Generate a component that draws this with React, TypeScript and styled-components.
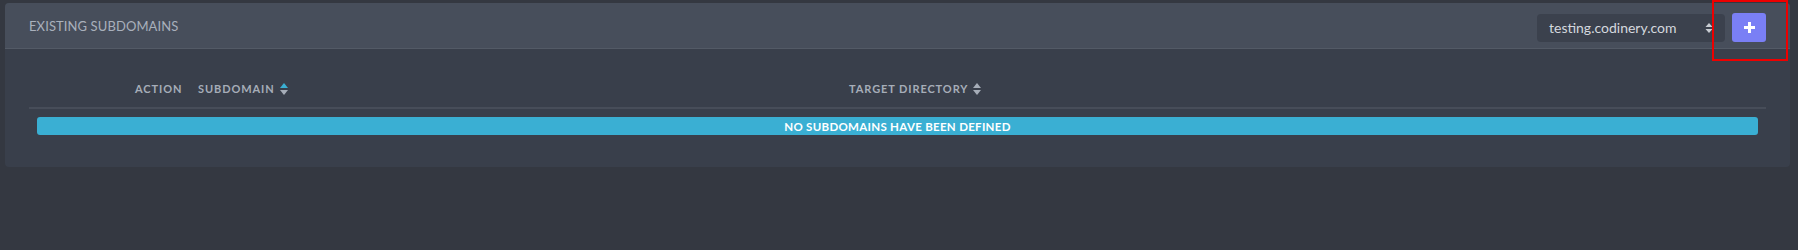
import styled, { createGlobalStyle } from 'styled-components'

const GlobalStyle = createGlobalStyle`
  html, body {
    margin: 0;
    padding: 0;
    background: #343841;
    font-family: Lato, "Noto Sans", sans-serif;
  }
`

const Page = styled.div`
  padding: 3px 8px 0 5px;
  height: 250px;
  box-sizing: border-box;
`

const Card = styled.section`
  background: #393f4b;
  border-radius: 4px;
  padding-bottom: 32px;
`

const CardHeader = styled.header`
  position: relative;
  display: flex;
  align-items: center;
  height: 46px;
  padding: 0 24px;
  background: #474e5b;
  border-radius: 4px 4px 0 0;
  border-bottom: 1px solid #535a66;
  box-sizing: border-box;
`

const Title = styled.h2`
  flex: 1;
  margin: 0;
  font-size: 13px;
  font-weight: 400;
  color: #a9b0bb;
  letter-spacing: 0.1px;
`

const Actions = styled.div`
  display: flex;
  align-items: center;
  gap: 7px;
  margin-top: 4px;
`

const Select = styled.div`
  display: flex;
  align-items: center;
  justify-content: space-between;
  width: 188px;
  height: 28px;
  padding: 0 12px;
  box-sizing: border-box;
  background: #3b414d;
  border-radius: 4px;
  color: #d4d8de;
  font-size: 14px;
`

const AddButton = styled.button`
  width: 34px;
  height: 29px;
  border: none;
  border-radius: 3px;
  background: #7a7ff5;
  display: flex;
  align-items: center;
  justify-content: center;
  padding: 0;
`

const Highlight = styled.div`
  position: absolute;
  left: 1707px;
  top: -3px;
  width: 76px;
  height: 61px;
  border: 2px solid #ee0000;
  box-sizing: border-box;
  pointer-events: none;
`

const Body = styled.div`
  padding: 0 24px;
`

const HeadRow = styled.div`
  display: grid;
  grid-template-columns: 106px 63px 651px 1fr;
  align-items: end;
  height: 60px;
  padding-bottom: 12px;
  box-sizing: border-box;
  border-bottom: 2px solid #474d59;
`

const HeadCell = styled.div`
  display: flex;
  align-items: center;
  gap: 5px;
  font-size: 11px;
  font-weight: 700;
  letter-spacing: 0.9px;
  color: #a6adb8;
  text-transform: uppercase;
`

const Empty = styled.div`
  margin: 8px 8px 0;
  height: 18px;
  border-radius: 3px;
  background: #3aafd3;
  color: #ffffff;
  font-size: 11.5px;
  font-weight: 700;
  letter-spacing: 0.3px;
  display: flex;
  align-items: center;
  justify-content: center;
`

function SortIcon({ active }: { active?: boolean }) {
  return (
    <svg width="8" height="12" viewBox="0 0 8 12">
      <path d="M4 0 L8 5 H0 Z" fill={active ? '#3aafd3' : '#a6adb8'} />
      <path d="M4 12 L8 7 H0 Z" fill="#a6adb8" />
    </svg>
  )
}

function SelectArrows() {
  return (
    <svg width="8" height="12" viewBox="0 0 8 12">
      <path d="M4 1 L7.5 5 H0.5 Z" fill="#c8ccd2" />
      <path d="M4 11 L7.5 7 H0.5 Z" fill="#c8ccd2" />
    </svg>
  )
}

export default function App() {
  return (
    <>
      <GlobalStyle />
      <Page>
        <Card>
          <CardHeader>
            <Title>EXISTING SUBDOMAINS</Title>
            <Actions>
              <Select>
                <span>testing.codinery.com</span>
                <SelectArrows />
              </Select>
              <AddButton aria-label="add">
                <svg width="13" height="13" viewBox="0 0 13 13">
                  <path d="M6.5 1 V12 M1 6.5 H12" stroke="#ffffff" strokeWidth="3" />
                </svg>
              </AddButton>
            </Actions>
            <Highlight />
          </CardHeader>
          <Body>
            <HeadRow>
              <HeadCell />
              <HeadCell>Action</HeadCell>
              <HeadCell>
                Subdomain <SortIcon active />
              </HeadCell>
              <HeadCell>
                Target Directory <SortIcon />
              </HeadCell>
            </HeadRow>
            <Empty>NO SUBDOMAINS HAVE BEEN DEFINED</Empty>
          </Body>
        </Card>
      </Page>
    </>
  )
}
